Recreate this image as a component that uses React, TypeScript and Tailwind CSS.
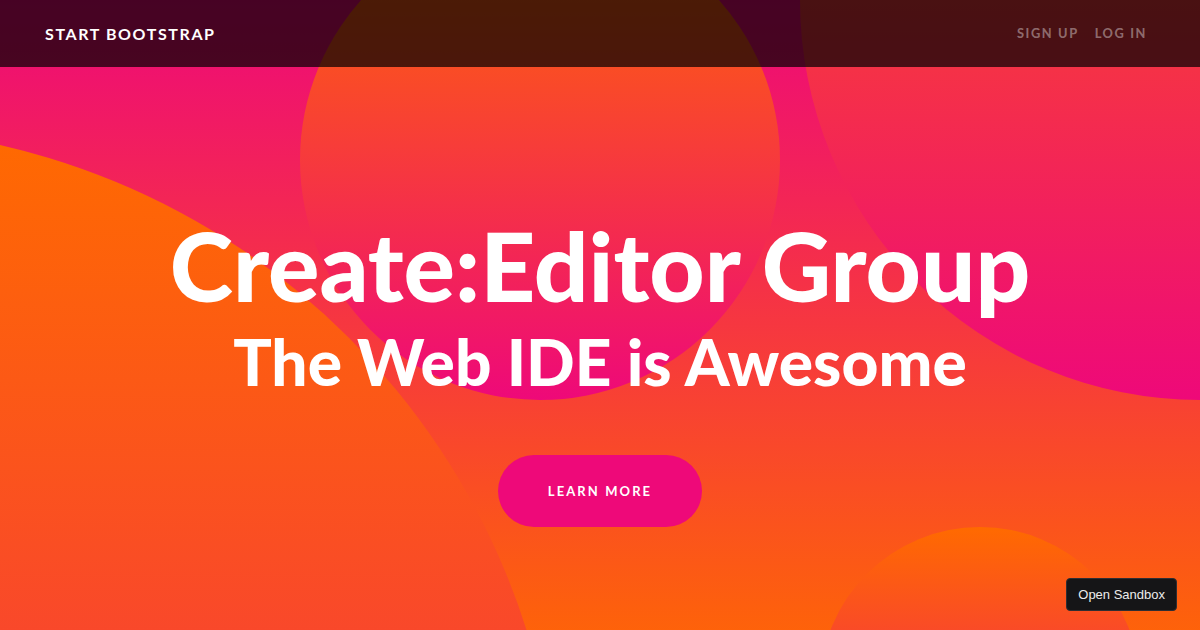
import React from "react"

const circle = "absolute rounded-full bg-[linear-gradient(180deg,#ff6a00_0%,#ee0979_100%)]"

const Navbar = () => (
  <nav className="absolute inset-x-0 top-0 z-20 h-[67px] bg-black/70">
    <div className="mx-auto flex h-full w-[1140px] items-center justify-between px-[15px]">
      <a href="#" className="text-[16px] font-bold uppercase tracking-[1.6px] text-white">Start Bootstrap</a>
      <ul className="flex items-center pb-[3px]">
        <li><a href="#" className="px-2 text-[12.8px] font-bold uppercase tracking-[1.6px] text-white/40">Sign Up</a></li>
        <li><a href="#" className="px-2 text-[12.8px] font-bold uppercase tracking-[1.6px] text-white/40">Log In</a></li>
      </ul>
    </div>
  </nav>
)

export default function App() {
  return (
    <div className="relative h-[630px] w-[1200px] overflow-hidden" style={{ fontFamily: "Lato, 'Noto Sans', sans-serif" }}>
      <Navbar />
      <header className="relative h-[687px] overflow-hidden bg-[linear-gradient(0deg,#ff6a00_0%,#ee0979_100%)]">
        {/* background circles */}
        <div className={`${circle} left-[-880px] top-[127px] h-[1440px] w-[1440px]`} />
        <div className={`${circle} left-[800px] top-[-400px] h-[800px] w-[800px]`} />
        <div className={`${circle} left-[820px] top-[527px] h-[320px] w-[320px]`} />
        <div className={`${circle} left-[300px] top-[-80px] h-[480px] w-[480px]`} />

        <div className="relative z-10 flex flex-col items-center pt-[207px] text-center text-white">
          <h1 className="mb-[2px] text-[96px] font-black leading-[1.2]">Create:Editor Group</h1>
          <h2 className="text-[64px] font-black leading-[1.2]">The Web IDE is Awesome</h2>
          <a
            href="#"
            className="mt-[54px] rounded-full bg-[#ee0979] px-[50px] py-6 text-[13px] font-bold uppercase leading-6 tracking-[2.1px] text-white"
          >
            Learn More
          </a>
        </div>
      </header>

      <button
        className="absolute bottom-[19px] right-[23px] z-30 rounded-[4px] border border-[#2e2e33] bg-[#151517] px-[11px] py-[7px] text-[13px] leading-[17px] text-[#ececec]"
        style={{ fontFamily: "'Liberation Sans', Arial, sans-serif" }}
      >
        Open Sandbox
      </button>
    </div>
  )
}
